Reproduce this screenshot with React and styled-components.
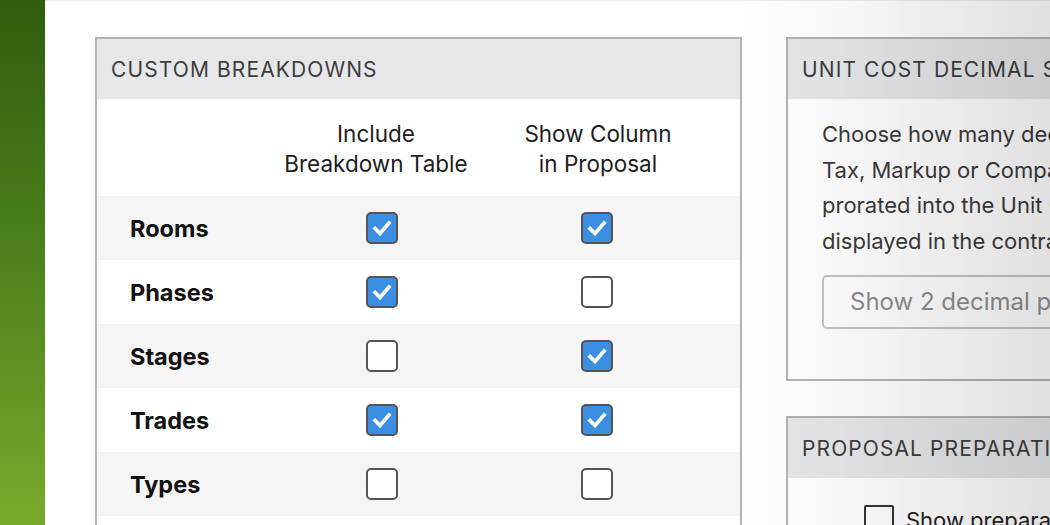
import React from 'react';
import styled, { createGlobalStyle } from 'styled-components';

const GlobalStyle = createGlobalStyle`
    html, body {
        margin: 0;
        padding: 0;
        background: #fff;
        font-family: Inter, "Liberation Sans", sans-serif;
    }
`

const Page = styled.div`
    position: relative;
    display: flex;
    width: 1050px;
    height: 525px;
    overflow: hidden;
    &::after {
        content: '';
        position: absolute;
        inset: 0;
        pointer-events: none;
        background: linear-gradient(to right, rgba(0,0,0,0) 0%, rgba(0,0,0,0) 70%, rgba(0,0,0,0.03) 80%, rgba(0,0,0,0.12) 100%);
    }
`
const Sidebar = styled.div`
    width: 45px;
    flex: none;
    background: linear-gradient(to bottom, #2f5e0d 0%, #4a7f1c 45%, #7aaa2c 100%);
`
const Main = styled.div`
    flex: 1;
    display: flex;
    align-items: flex-start;
    gap: 44px;
    padding: 36px 0 0 50px;
    border-top: 1px solid #ededed;
`
const Column = styled.div`
    display: flex;
    flex-direction: column;
    gap: 35px;
    flex: none;
`
const Card = styled.div`
    width: 643px;
    border: 2px solid #b3b3b3;
    border-bottom: ${p => p.$open ? 'none' : '2px solid #b3b3b3'};
    padding-bottom: ${p => p.$open ? '40px' : '0'};
    background: #fff;
    flex: none;
`
const CardHeader = styled.div`
    height: 60px;
    background: #e6e7e8;
    display: flex;
    align-items: center;
    padding-left: 14px;
    font-size: 21px;
    letter-spacing: 1.1px;
    color: #3d3d3d;
    white-space: nowrap;
`
const Grid = styled.div`
    display: grid;
    grid-template-columns: 170px 230px 200px 1fr;
`
const HeadCell = styled.div`
    text-align: center;
    font-size: 22.5px;
    line-height: 30px;
    color: #1d1d1d;
    padding: 20px 0 17px 0;
    white-space: nowrap;
    transform: translateX(${p => p.$shift || 0}px);
`
const Row = styled.div`
    display: contents;
    & > div {
        background: ${p => p.$shade ? '#f5f5f5' : '#fff'};
        height: 64px;
        display: flex;
        align-items: center;
    }
`
const Label = styled.div`
    padding-left: 33px;
    font-size: 23.5px;
    font-weight: 700;
    color: #111;
`
const Cell = styled.div`
    justify-content: center;
`
const Box = styled.div`
    width: 28px;
    height: 28px;
    border: 2px solid #555;
    border-radius: 5px;
    background: ${p => p.$on ? '#3b8fe2' : '#fff'};
    display: flex;
    align-items: center;
    justify-content: center;
`
const Body = styled.div`
    padding: 18px 0 50px 34px;
    font-size: 22px;
    line-height: 35.5px;
    color: #3a3a3a;
    white-space: nowrap;
`
const Select = styled.div`
    margin-top: 16px;
    height: 50px;
    border: 2px solid #c4c4c4;
    border-radius: 5px;
    display: flex;
    align-items: center;
    padding-left: 26px;
    color: #8d8d8d;
    font-size: 24px;
`
const OptionRow = styled.div`
    display: flex;
    align-items: center;
    gap: 12px;
    padding: 27px 0 0 76px;
    font-size: 22px;
    color: #222;
    white-space: nowrap;
`
const SmallBox = styled.div`
    width: 26px;
    height: 26px;
    border: 2px solid #333;
    border-radius: 2px;
`

const Check = ({ on }) => (
    <Box $on={on}>
        {on && (
            <svg width="22" height="22" viewBox="0 0 22 22">
                <path d="M4 11.5 L9 16.5 L18 6" fill="none" stroke="#fff" strokeWidth="3.6" strokeLinecap="square" />
            </svg>
        )}
    </Box>
)

const rows = [
    ['Rooms', true, true],
    ['Phases', true, false],
    ['Stages', false, true],
    ['Trades', true, true],
    ['Types', false, false],
]

const App = () => {
    return (
        <Page>
            <GlobalStyle />
            <Sidebar />
            <Main>
                <Card $open>
                    <CardHeader>CUSTOM BREAKDOWNS</CardHeader>
                    <Grid>
                        <HeadCell />
                        <HeadCell $shift={-6}>Include<br />Breakdown Table</HeadCell>
                        <HeadCell $shift={1}>Show Column<br />in Proposal</HeadCell>
                        <HeadCell />
                        {rows.map(([name, a, b], i) => (
                            <Row key={name} $shade={i % 2 === 0}>
                                <Label>{name}</Label>
                                <Cell><Check on={a} /></Cell>
                                <Cell><Check on={b} /></Cell>
                                <Cell />
                            </Row>
                        ))}
                    </Grid>
                </Card>
                <Column>
                    <Card>
                        <CardHeader>UNIT COST DECIMAL SETTINGS</CardHeader>
                        <Body>
                            Choose how many decimal places to show when<br />
                            Tax, Markup or Company Overhead costs are<br />
                            prorated into the Unit Cost of line items<br />
                            displayed in the contract proposal.
                            <Select>Show 2 decimal places</Select>
                        </Body>
                    </Card>
                    <Card $open>
                        <CardHeader>PROPOSAL PREPARATION</CardHeader>
                        <OptionRow>
                            <SmallBox />
                            Show preparation details
                        </OptionRow>
                    </Card>
                </Column>
            </Main>
        </Page>
    );
};

export default App;
